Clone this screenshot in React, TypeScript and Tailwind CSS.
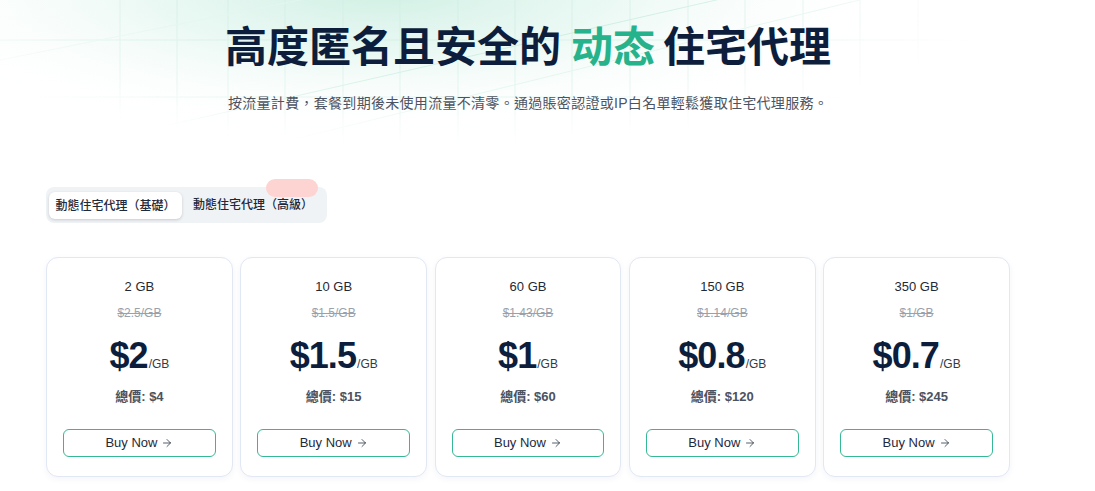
import React from "react";
import { ArrowRight } from "lucide-react";

const plans = [
  { gb: "2 GB", old: "$2.5/GB", price: "$2", total: "$4" },
  { gb: "10 GB", old: "$1.5/GB", price: "$1.5", total: "$15" },
  { gb: "60 GB", old: "$1.43/GB", price: "$1", total: "$60" },
  { gb: "150 GB", old: "$1.14/GB", price: "$0.8", total: "$120" },
  { gb: "350 GB", old: "$1/GB", price: "$0.7", total: "$245" },
];

function Decoration() {
  const vx = [120, 177, 228, 285, 343, 400, 458, 515, 572, 630, 688, 745, 803, 860, 918];
  return (
    <svg
      className="absolute left-0 top-0 pointer-events-none"
      width="1095"
      height="170"
      viewBox="0 0 1095 170"
    >
      <defs>
        <radialGradient id="glow" cx="380" cy="-10" r="520" gradientUnits="userSpaceOnUse" gradientTransform="translate(380 -10) scale(1 0.28) translate(-380 10)">
          <stop offset="0" stopColor="#cdefe2" stopOpacity="0.95" />
          <stop offset="0.45" stopColor="#e2f6ef" stopOpacity="0.7" />
          <stop offset="1" stopColor="#ffffff" stopOpacity="0" />
        </radialGradient>
        <radialGradient id="fade" cx="430" cy="0" r="560" gradientUnits="userSpaceOnUse" gradientTransform="translate(430 0) scale(1 0.26) translate(-430 0)">
          <stop offset="0" stopColor="#fff" stopOpacity="1" />
          <stop offset="0.7" stopColor="#fff" stopOpacity="0.5" />
          <stop offset="1" stopColor="#fff" stopOpacity="0" />
        </radialGradient>
        <mask id="m">
          <rect x="0" y="0" width="1095" height="170" fill="url(#fade)" />
        </mask>
      </defs>
      <rect x="0" y="0" width="1095" height="170" fill="url(#glow)" />
      <g mask="url(#m)" stroke="#d3efe4" strokeWidth="1">
        {vx.map((x) => (
          <line key={x} x1={x} y1="0" x2={x} y2="170" />
        ))}
        <line x1="0" y1="40" x2="1095" y2="40" />
        <line x1="0" y1="97" x2="1095" y2="97" />
        <line x1="60" y1="150" x2="760" y2="-10" stroke="#c6ecdd" />
        <line x1="250" y1="150" x2="900" y2="-10" stroke="#d6f2e8" />
        <line x1="0" y1="60" x2="400" y2="-20" stroke="#e4f6ef" />
      </g>
    </svg>
  );
}

export default function App() {
  return (
    <div className="relative min-h-[491px] w-full overflow-hidden bg-white font-['Liberation_Sans','Noto_Sans_CJK_TC',sans-serif]">
      <Decoration />
      <div className="relative ml-[46px] w-[964px]">
        <div className="pt-[23px] text-center">
          <h1 className="text-[42px] font-bold leading-[50px] text-[#0c1e3c] font-['Liberation_Sans','Noto_Sans_CJK_SC',sans-serif]">
            高度匿名且安全的<span className="ml-[10px] mr-[8px] text-[#26b38b]">动态</span>住宅代理
          </h1>
          <p className="mt-[20px] text-[14px] leading-[20px] tracking-[0.3px] text-[#4d5461]">
            按流量計費，套餐到期後未使用流量不清零。通過賬密認證或IP白名單輕鬆獲取住宅代理服務。
          </p>
        </div>

        <div className="relative mt-[74px] inline-flex h-[36px] items-center rounded-[8px] bg-[#f0f3f5] pl-[3px] pr-[3px]">
          <div className="mt-[1px] flex h-[27px] w-[133px] items-center justify-center rounded-[6px] bg-white text-[12px] font-medium text-[#1e293b] shadow-[0_1px_3px_rgba(15,23,42,0.18)]">
            動態住宅代理（基礎）
          </div>
          <div className="flex h-[27px] w-[142px] items-center justify-center text-[12px] font-medium text-[#1e293b]">
            動態住宅代理（高級）
          </div>
          <span className="absolute left-[220px] top-[-8px] h-[18px] w-[52px] rounded-full bg-[#fdd4d1]" />
        </div>

        <div className="mt-[34px] grid grid-cols-5 gap-[7.5px]">
          {plans.map((p) => (
            <div
              key={p.gb}
              className="flex flex-col items-center rounded-[12px] border border-[#e2e7f4] bg-white px-4 pt-[19px] pb-[19px] shadow-[0_2px_6px_rgba(40,60,130,0.05)]"
            >
              <div className="text-[13px] leading-[20px] text-[#1f2937]">{p.gb}</div>
              <div className="mt-[8px] text-[12px] leading-[16px] text-[#9aa1ab] line-through">{p.old}</div>
              <div className="mt-[13px] flex h-[44px] items-baseline text-[#0c1e3c]">
                <span className="text-[36px] font-bold leading-[44px] tracking-tight">{p.price}</span>
                <span className="ml-[1px] text-[12px] leading-none text-[#333a45]">/GB</span>
              </div>
              <div className="mt-[9px] text-[13px] font-bold leading-[20px] text-[#4b5260]">
                總價: {p.total}
              </div>
              <button className="mt-[22px] flex h-[28px] w-full items-center justify-center gap-[4px] rounded-[6px] border border-[#35b896] bg-white text-[13px] text-[#1e293b]">
                Buy Now
                <ArrowRight size={12} strokeWidth={1.5} />
              </button>
            </div>
          ))}
        </div>
      </div>
    </div>
  );
}
